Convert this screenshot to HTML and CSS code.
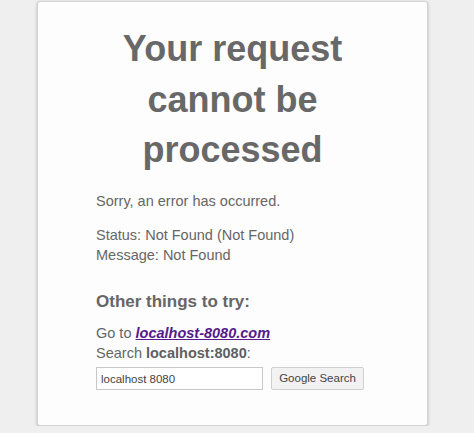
FILE: index.html
```html
<!DOCTYPE html>
<html>
<head>
	<meta charset="utf-8">
	<title>Error</title>
	<link rel="stylesheet" href="styles.css">
</head>
<body>

<div class="card">
	<h1>Your request cannot be processed</h1>

	<div class="content">
		<p class="sorry">Sorry, an error has occurred.</p>
		<p class="status">Status: Not Found (Not Found)<br>Message: Not Found</p>

		<h2>Other things to try:</h2>
		<p class="try">Go to <a href="#">localhost-8080.com</a><br>Search <b>localhost:8080</b>:</p>
		<form class="search" onsubmit="return false">
			<input type="text" class="search-input" value="localhost 8080">
			<button type="submit" class="search-btn">Google Search</button>
		</form>
	</div>
</div>

</body>
</html>
```

FILE: styles.css
```css
html, body {
	margin: 0;
	padding: 0;
	background: #efefef;
}
body {
	color: #666;
	font-family: "Liberation Sans", Arial, Helvetica, sans-serif;
}
.card {
	box-sizing: border-box;
	width: 391px;
	margin: 1px 0 0 37px;
	padding: 22px 0 35px;
	background: #fdfdfd;
	border: 1px solid #d4d4d4;
	border-radius: 3px;
	box-shadow: 0 1px 3px rgba(0, 0, 0, .25);
}
h1 {
	margin: 0 auto;
	width: 260px;
	font-size: 36px;
	line-height: 50.5px;
	font-weight: bold;
	text-align: center;
	color: #686868;
}
.content {
	padding: 0 0 0 58px;
}
p {
	margin: 0;
	font-size: 14.5px;
	line-height: 20px;
}
.sorry {
	margin-top: 15px;
}
.status {
	margin-top: 14px;
}
h2 {
	margin: 27px 0 0;
	font-size: 17px;
	line-height: 20px;
	font-weight: bold;
}
.try {
	margin-top: 11px;
}
.try a {
	color: #551a8b;
	font-weight: bold;
	font-style: italic;
}
.try b {
	color: #5f5f5f;
}
.search {
	display: flex;
	gap: 8px;
	margin: 4px 0 0;
}
.search-input {
	box-sizing: border-box;
	width: 167px;
	height: 23px;
	margin: 0;
	padding: 1px 4px 0;
	font-family: "Liberation Sans", Arial, sans-serif;
	font-size: 11.5px;
	color: #444;
	background: #fff;
	border: 1px solid #c8c8c8;
	border-radius: 0;
	outline: none;
}
.search-btn {
	box-sizing: border-box;
	width: 93px;
	height: 23px;
	margin: 0;
	padding: 0;
	font-family: "Liberation Sans", Arial, sans-serif;
	font-size: 11.5px;
	color: #444;
	background: #f2f2f2;
	border: 1px solid #d0d0d0;
	border-radius: 2px;
}
```
